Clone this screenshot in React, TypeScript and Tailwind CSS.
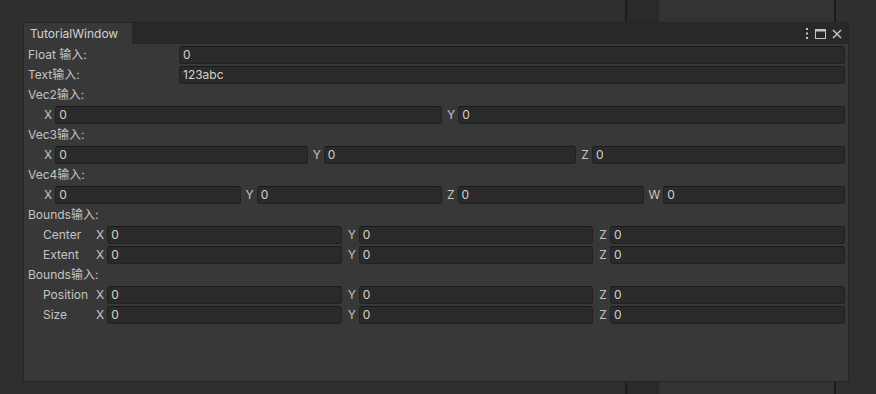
import React from 'react'

const font = { fontFamily: 'Inter, "Noto Sans CJK SC", sans-serif' }

function Field({ value = '0' }: { value?: string }) {
  return (
    <div className="flex h-[18px] min-w-0 flex-1 items-center rounded-[3px] border border-[#212121] border-t-[#1a1a1a] bg-[#2a2a2a] pl-[3px] text-[12px] text-[#d2d2d2]">
      {value}
    </div>
  )
}

function Cell({ label }: { label: string }) {
  return (
    <div className="flex min-w-0 flex-1 items-center">
      <span className="mr-[3px] text-[12px] text-[#c4c4c4]">{label}</span>
      <Field />
    </div>
  )
}

function Row({ children, className = '' }: { children: React.ReactNode; className?: string }) {
  return <div className={`flex h-[20px] items-center ${className}`}>{children}</div>
}

function VecRow({ axes }: { axes: string[] }) {
  return (
    <Row className="gap-[5px] pl-[16px]">
      {axes.map((a) => (
        <Cell key={a} label={a} />
      ))}
    </Row>
  )
}

function BoundsRow({ name }: { name: string }) {
  return (
    <Row className="pl-[15px]">
      <span className="w-[53px] shrink-0 text-[12px] text-[#c4c4c4]">{name}</span>
      <div className="flex flex-1 gap-[6px]">
        <Cell label="X" />
        <Cell label="Y" />
        <Cell label="Z" />
      </div>
    </Row>
  )
}

function Label({ text }: { text: string }) {
  return (
    <Row>
      <span className="text-[12px] text-[#c4c4c4]">{text}</span>
    </Row>
  )
}

export default function App() {
  return (
    <div className="relative h-[394px] w-[876px] overflow-hidden bg-[#2e2e2e]" style={font}>
      {/* background panels behind the floating window */}
      <div className="flex h-full">
        <div className="w-[625px] bg-[#2f2f2f]" />
        <div className="w-[2px] bg-[#1c1c1c]" />
        <div className="w-[32px] bg-[#2a2a2a]" />
        <div className="w-[175px] bg-[#333333]" />
        <div className="w-[2px] bg-[#1c1c1c]" />
        <div className="flex-1 bg-[#2f2f2f]" />
      </div>

      {/* floating editor window */}
      <div className="absolute left-[23px] top-[22px] flex h-[360px] w-[826px] flex-col border border-[#262626] bg-[#383838]">
        <div className="flex h-[21px] shrink-0 items-stretch bg-[#282828]">
          <div className="flex w-[108px] items-center bg-[#383838] pl-[6px] text-[12px] text-[#d2d2d2]">
            TutorialWindow
          </div>
          <div className="flex-1" />
          <div className="flex items-center gap-[6px] pr-[6px] text-[#c4c4c4]">
            <svg width="4" height="11" viewBox="0 0 4 11">
              <rect x="1" y="0" width="2" height="2" fill="#c4c4c4" />
              <rect x="1" y="4.5" width="2" height="2" fill="#c4c4c4" />
              <rect x="1" y="9" width="2" height="2" fill="#c4c4c4" />
            </svg>
            <svg width="11" height="10" viewBox="0 0 11 10">
              <rect x="0.5" y="0.5" width="10" height="9" fill="none" stroke="#c4c4c4" />
              <rect x="0.5" y="0.5" width="10" height="2" fill="#c4c4c4" />
            </svg>
            <svg width="10" height="10" viewBox="0 0 10 10">
              <path d="M1 1 L9 9 M9 1 L1 9" stroke="#c4c4c4" strokeWidth="1.5" />
            </svg>
          </div>
        </div>

        <div className="flex flex-col pl-[4px] pr-[3px] pt-[1px]">
          <Row>
            <span className="w-[151px] shrink-0 text-[12px] text-[#c4c4c4]">Float 输入:</span>
            <Field />
          </Row>
          <Row>
            <span className="w-[151px] shrink-0 text-[12px] text-[#c4c4c4]">Text输入:</span>
            <Field value="123abc" />
          </Row>
          <Label text="Vec2输入:" />
          <VecRow axes={['X', 'Y']} />
          <Label text="Vec3输入:" />
          <VecRow axes={['X', 'Y', 'Z']} />
          <Label text="Vec4输入:" />
          <VecRow axes={['X', 'Y', 'Z', 'W']} />
          <Label text="Bounds输入:" />
          <BoundsRow name="Center" />
          <BoundsRow name="Extent" />
          <Label text="Bounds输入:" />
          <BoundsRow name="Position" />
          <BoundsRow name="Size" />
        </div>
      </div>
    </div>
  )
}
